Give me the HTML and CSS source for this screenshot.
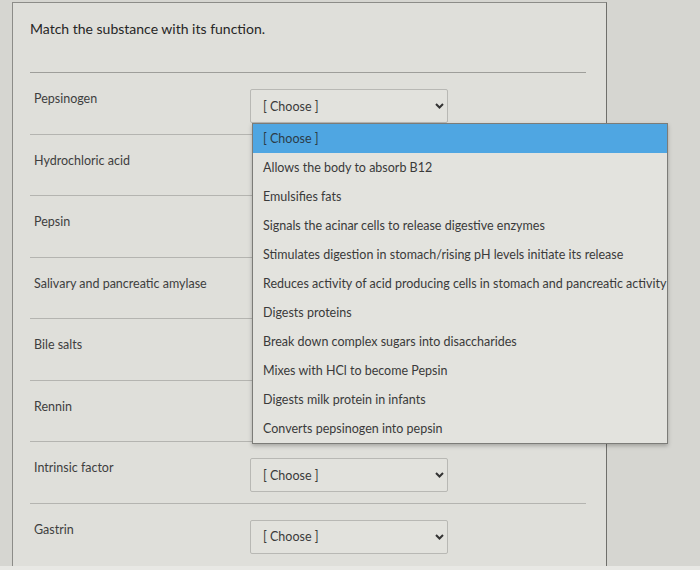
FILE: index.html
```html
<!DOCTYPE html>
<html lang="en">

<head>
  <meta charset="UTF-8">
  <title>Match the substance with its function</title>
  <link rel="stylesheet" href="styles.css">
</head>

<body>
  <div class="screen">
    <div class="quiz">
      <p class="question">Match the substance with its function.</p>
      <div class="answers">
        <div class="answer">
          <div class="label">Pepsinogen</div>
          <div class="field">
            <div class="select">
              <span>[ Choose ]</span>
              <svg width="9" height="6" viewBox="0 0 9 6"><polyline points="1,1 4.5,4.5 8,1" /></svg>
            </div>
            <ul class="options">
              <li class="active">[ Choose ]</li>
              <li>Allows the body to absorb B12</li>
              <li>Emulsifies fats</li>
              <li>Signals the acinar cells to release digestive enzymes</li>
              <li>Stimulates digestion in stomach/rising pH levels initiate its release</li>
              <li>Reduces activity of acid producing cells in stomach and pancreatic activity</li>
              <li>Digests proteins</li>
              <li>Break down complex sugars into disaccharides</li>
              <li>Mixes with HCl to become Pepsin</li>
              <li>Digests milk protein in infants</li>
              <li>Converts pepsinogen into pepsin</li>
            </ul>
          </div>
        </div>
        <div class="answer">
          <div class="label">Hydrochloric acid</div>
          <div class="field"></div>
        </div>
        <div class="answer">
          <div class="label">Pepsin</div>
          <div class="field"></div>
        </div>
        <div class="answer">
          <div class="label">Salivary and pancreatic amylase</div>
          <div class="field"></div>
        </div>
        <div class="answer">
          <div class="label">Bile salts</div>
          <div class="field"></div>
        </div>
        <div class="answer">
          <div class="label">Rennin</div>
          <div class="field"></div>
        </div>
        <div class="answer">
          <div class="label">Intrinsic factor</div>
          <div class="field">
            <div class="select">
              <span>[ Choose ]</span>
              <svg width="9" height="6" viewBox="0 0 9 6"><polyline points="1,1 4.5,4.5 8,1" /></svg>
            </div>
          </div>
        </div>
        <div class="answer">
          <div class="label">Gastrin</div>
          <div class="field">
            <div class="select">
              <span>[ Choose ]</span>
              <svg width="9" height="6" viewBox="0 0 9 6"><polyline points="1,1 4.5,4.5 8,1" /></svg>
            </div>
          </div>
        </div>
      </div>
    </div>
  </div>
</body>

</html>
```

FILE: styles.css
```css
html,
body {
  margin: 0;
  padding: 0;
  height: 100%;
  background: #e8e8e4;
  font-family: Lato, "Liberation Sans", sans-serif;
  color: #3a3a3a;
}

.screen {
  display: flex;
  height: 566px;
  overflow: hidden;
  background: #d6d6d1;
}

.quiz {
  margin: 2px 0 0 12px;
  width: 556px;
  padding: 0 20px 0 17px;
  background: #dfdfda;
  border-top: 1px solid #8c8c88;
  border-left: 1px solid #8c8c88;
  border-right: 1px solid #6f6f6b;
}

.question {
  margin: 0 0 33px;
  padding-top: 16px;
  font-size: 14px;
  line-height: 20px;
  color: #262626;
}

.answer {
  display: grid;
  grid-template-columns: 220px 198px;
  height: 61.5px;
  border-top: 1px solid #b4b4b0;
  box-sizing: border-box;
}

.answer:first-child {
  border-top-color: #9e9e9a;
}

.label {
  padding: 16px 0 0 4px;
  font-size: 12.5px;
  line-height: 20px;
  color: #3e3e3e;
}

.field {
  position: relative;
}

.select {
  display: flex;
  align-items: center;
  justify-content: space-between;
  margin-top: 16px;
  height: 34px;
  padding: 0 3px 0 12px;
  box-sizing: border-box;
  border: 1px solid #b8b8b4;
  border-radius: 2px;
  background: #e2e2dd;
  font-size: 12.5px;
}

.select svg {
  fill: none;
  stroke: #333;
  stroke-width: 2;
}

/* open list of the first select */
.options {
  position: absolute;
  top: 50px;
  left: 2px;
  width: 414px;
  margin: 0;
  padding: 0;
  list-style: none;
  background: #e3e3de;
  border: 1px solid #7c7c78;
  box-shadow: 0 2px 4px rgba(0, 0, 0, .25);
  z-index: 2;
}

.options li {
  height: 29px;
  line-height: 29px;
  padding-left: 10px;
  font-size: 12.5px;
  white-space: nowrap;
  color: #3a3a3a;
}

.options li.active {
  background: #4fa6e2;
  color: #2c3b47;
}
```
